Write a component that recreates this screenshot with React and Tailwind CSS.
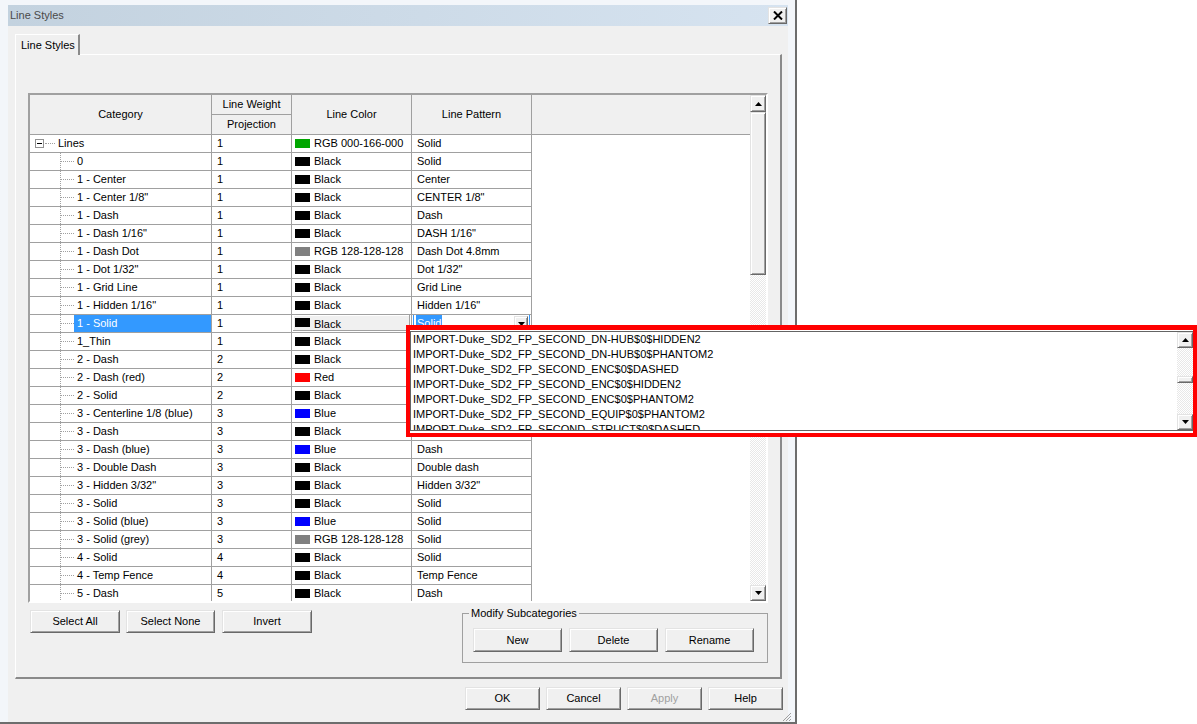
import React from "react";

const rows = [
  ["Lines", "1", "#00a600", "RGB 000-166-000", "Solid"],
  ["0", "1", "#000000", "Black", "Solid"],
  ["1 - Center", "1", "#000000", "Black", "Center"],
  ["1 - Center 1/8\"", "1", "#000000", "Black", "CENTER 1/8\""],
  ["1 - Dash", "1", "#000000", "Black", "Dash"],
  ["1 - Dash 1/16\"", "1", "#000000", "Black", "DASH 1/16\""],
  ["1 - Dash Dot", "1", "#808080", "RGB 128-128-128", "Dash Dot 4.8mm"],
  ["1 - Dot 1/32\"", "1", "#000000", "Black", "Dot 1/32\""],
  ["1 - Grid Line", "1", "#000000", "Black", "Grid Line"],
  ["1 - Hidden 1/16\"", "1", "#000000", "Black", "Hidden 1/16\""],
  ["1 - Solid", "1", "#000000", "Black", "Solid"],
  // patterns of the next rows sit under the open drop-down list
  ["1_Thin", "1", "#000000", "Black", ""],
  ["2 - Dash", "2", "#000000", "Black", ""],
  ["2 - Dash (red)", "2", "#ff0000", "Red", ""],
  ["2 - Solid", "2", "#000000", "Black", ""],
  ["3 - Centerline 1/8 (blue)", "3", "#0000ff", "Blue", ""],
  ["3 - Dash", "3", "#000000", "Black", ""],
  ["3 - Dash (blue)", "3", "#0000ff", "Blue", "Dash"],
  ["3 - Double Dash", "3", "#000000", "Black", "Double dash"],
  ["3 - Hidden 3/32\"", "3", "#000000", "Black", "Hidden 3/32\""],
  ["3 - Solid", "3", "#000000", "Black", "Solid"],
  ["3 - Solid (blue)", "3", "#0000ff", "Blue", "Solid"],
  ["3 - Solid (grey)", "3", "#808080", "RGB 128-128-128", "Solid"],
  ["4 - Solid", "4", "#000000", "Black", "Solid"],
  ["4 - Temp Fence", "4", "#000000", "Black", "Temp Fence"],
  ["5 - Dash", "5", "#000000", "Black", "Dash"],
];

const patterns = [
  "IMPORT-Duke_SD2_FP_SECOND_DN-HUB$0$HIDDEN2",
  "IMPORT-Duke_SD2_FP_SECOND_DN-HUB$0$PHANTOM2",
  "IMPORT-Duke_SD2_FP_SECOND_ENC$0$DASHED",
  "IMPORT-Duke_SD2_FP_SECOND_ENC$0$HIDDEN2",
  "IMPORT-Duke_SD2_FP_SECOND_ENC$0$PHANTOM2",
  "IMPORT-Duke_SD2_FP_SECOND_EQUIP$0$PHANTOM2",
  "IMPORT-Duke_SD2_FP_SECOND_STRUCT$0$DASHED",
];

const bevel =
  "bg-[#f0f0f0] border border-t-[#e3e3e3] border-l-[#e3e3e3] border-r-[#696969] border-b-[#696969] shadow-[inset_1px_1px_0_#ffffff,inset_-1px_-1px_0_#a0a0a0]";

function Btn({ children, className = "", disabled }) {
  return (
    <button
      type="button"
      className={`flex items-center justify-center ${bevel} ${
        disabled ? "text-[#a0a0a0]" : "text-black"
      } ${className}`}
    >
      {children}
    </button>
  );
}

function Arrow({ down }) {
  return (
    <svg width="7" height="4" viewBox="0 0 7 4">
      <polygon points={down ? "0,0 7,0 3.5,4" : "0,4 7,4 3.5,0"} fill="#000" />
    </svg>
  );
}

function Row({ row, index }) {
  const [name, weight, color, colorName, pattern] = row;
  const root = index === 0;
  const selected = index === 10;
  return (
    <div className="flex h-[18px] shrink-0">
      <div className="flex w-[182px] border-r border-b border-[#a0a0a0]">
        {root ? (
          <>
            <div className="ml-[5px] flex items-center">
              <div className="w-[9px] h-[9px] border border-[#919191] bg-white flex items-center justify-center">
                <div className="w-[5px] h-px bg-black" />
              </div>
            </div>
            <div className="ml-[1px] w-[10px] self-center border-t border-dotted border-[#a0a0a0]" />
            <div className="pl-[3px] flex items-center">{name}</div>
          </>
        ) : (
          <>
            <div className="ml-[30px] border-l border-dotted border-[#a0a0a0]" />
            <div className="w-[13px] self-center border-t border-dotted border-[#a0a0a0]" />
            <div
              className={`flex-1 flex items-center pl-[3px] ${
                selected ? "bg-[#3399ff] text-white" : ""
              }`}
            >
              {name}
            </div>
          </>
        )}
      </div>
      <div className="w-[80px] border-r border-b border-[#a0a0a0] pl-[5px] flex items-center">
        {weight}
      </div>
      {selected ? (
        <div className="w-[120px] border-r border-b border-[#a0a0a0] flex items-start">
          <div className="ml-[1px] w-[117px] h-[16px] bg-[#f0f0f0] border-r border-b border-[#a0a0a0] shadow-[inset_1px_1px_0_#ffffff] flex items-center pl-[2px]">
            <div className="w-[15px] h-[9px]" style={{ background: color }} />
            <span className="ml-[4px] pt-[3px]">{colorName}</span>
          </div>
        </div>
      ) : (
        <div className="w-[120px] border-r border-b border-[#a0a0a0] pl-[3px] flex items-center">
          <div className="w-[15px] h-[9px]" style={{ background: color }} />
          <span className="ml-[4px]">{colorName}</span>
        </div>
      )}
      {selected ? (
        <div className="w-[120px] border-r border-b border-[#a0a0a0] flex">
          <div className="flex-1 flex items-center ml-[1px] mr-[1px] border-x border-[#3399ff]">
            <span className="ml-[2px] px-[1px] bg-[#3399ff] text-white h-full flex items-center">
              {pattern}
            </span>
            <div className={`ml-auto mr-[1px] w-[14px] h-[15px] flex items-center justify-center ${bevel}`}>
              <Arrow down />
            </div>
          </div>
        </div>
      ) : (
        <div className="w-[120px] border-r border-b border-[#a0a0a0] pl-[5px] flex items-center">
          {pattern}
        </div>
      )}
      <div className="w-[218px]" />
    </div>
  );
}

function Table() {
  return (
    <div className="ml-[12px] mt-[38px] w-[740px] h-[510px] border-t-2 border-l-2 border-t-[#a0a0a0] border-l-[#a0a0a0] border-r-2 border-b-2 border-r-white border-b-white flex bg-white">
      <div className="w-[720px] flex flex-col overflow-hidden">
        <div className="flex h-[40px] shrink-0 bg-[#f0f0f0]">
          <div className="w-[182px] border-r border-b border-[#a0a0a0] flex items-center justify-center">
            Category
          </div>
          <div className="w-[80px] border-r border-b border-[#a0a0a0] flex flex-col">
            <div className="h-[20px] border-b border-[#a0a0a0] flex items-center justify-center">
              Line Weight
            </div>
            <div className="flex-1 flex items-center justify-center">Projection</div>
          </div>
          <div className="w-[120px] border-r border-b border-[#a0a0a0] flex items-center justify-center">
            Line Color
          </div>
          <div className="w-[120px] border-r border-b border-[#a0a0a0] flex items-center justify-center">
            Line Pattern
          </div>
          <div className="w-[218px] border-b border-[#a0a0a0]" />
        </div>
        <div className="flex-1 overflow-hidden flex flex-col">
          {rows.map((r, i) => (
            <Row key={i} row={r} index={i} />
          ))}
        </div>
      </div>
      <div className="w-[16px] flex flex-col">
        <div className={`h-[17px] flex items-center justify-center ${bevel}`}>
          <Arrow />
        </div>
        <div className={`h-[163px] ${bevel}`} />
        <div className="flex-1 bg-[repeating-conic-gradient(#ffffff_0%_25%,#e8e8e8_0%_50%)] bg-[length:2px_2px]" />
        <div className={`h-[16px] flex items-center justify-center ${bevel}`}>
          <Arrow down />
        </div>
      </div>
    </div>
  );
}

function Dropdown() {
  return (
    <div className="absolute left-[406px] top-[325px] w-[791px] h-[112px] border-[4px] border-t-[5px] border-[#ff0000] bg-white">
      <div className="mt-[1px] h-[100px] flex border-y border-l border-[#646464]">
        <div className="flex-1 overflow-hidden pl-[2px]">
          {patterns.map((p) => (
            <div key={p} className="h-[15px] flex items-center whitespace-nowrap">
              {p}
            </div>
          ))}
        </div>
        <div className="w-[16px] flex flex-col">
          <div className={`h-[16px] flex items-center justify-center ${bevel}`}>
            <Arrow />
          </div>
          <div className="h-[28px] bg-[repeating-conic-gradient(#ffffff_0%_25%,#e8e8e8_0%_50%)] bg-[length:2px_2px]" />
          <div className={`h-[7px] ${bevel}`} />
          <div className="flex-1 bg-[repeating-conic-gradient(#ffffff_0%_25%,#e8e8e8_0%_50%)] bg-[length:2px_2px]" />
          <div className={`h-[16px] flex items-center justify-center ${bevel}`}>
            <Arrow down />
          </div>
        </div>
      </div>
    </div>
  );
}

export default function App() {
  return (
    <div className="relative w-[1197px] h-[724px] bg-white overflow-hidden font-['Liberation_Sans',Arial,sans-serif] text-[11px] leading-none text-black">
      <div className="w-[797px] h-[724px] bg-[#f3f6fa] border-r-2 border-b-2 border-[#6d6d6d] pl-[8px] pr-[7px] pt-[5px] pb-[5px] flex flex-col">
        <div className="h-[21px] shrink-0 bg-linear-to-r from-[#c3d2df] to-[#d6e3f0] flex items-center pl-[2px]">
          <span className="text-[#4a4a4a]">Line Styles</span>
          <div className={`ml-auto mr-[1px] w-[19px] h-[17px] flex items-center justify-center ${bevel}`}>
            <svg width="10" height="9" viewBox="0 0 10 9">
              <path d="M1 0.5 L9 8.5 M9 0.5 L1 8.5" stroke="#000" strokeWidth="2" />
            </svg>
          </div>
        </div>
        <div className="flex-1 bg-[#f0f0f0] flex flex-col">
          <div className="ml-[7px] mt-[8px] flex">
            <div className="relative h-[21px] -mb-[1px] w-[65px] bg-[#f0f0f0] border-t border-l border-white border-r-2 border-r-[#8a8a8a] flex items-center pl-[5px]">
              Line Styles
            </div>
          </div>
          <div className="ml-[7px] w-[767px] h-[625px] border-t border-l border-white border-r-2 border-b-2 border-r-[#8a8a8a] border-b-[#8a8a8a] flex flex-col">
            <Table />
            <div className="mt-[4px] flex items-start">
              <div className="ml-[14px] mt-[3px] flex">
                <Btn className="w-[90px] h-[23px]">Select All</Btn>
                <Btn className="ml-[6px] w-[89px] h-[23px]">Select None</Btn>
                <Btn className="ml-[7px] w-[90px] h-[23px]">Invert</Btn>
              </div>
              <fieldset className="ml-[150px] w-[306px] border border-[#a0a0a0] pl-[10px] pt-[8px] pb-[10px]">
                <legend className="-ml-[4px] px-[2px] leading-[13px]">Modify Subcategories</legend>
                <div className="flex gap-[7px]">
                  <Btn className="w-[89px] h-[24px]">New</Btn>
                  <Btn className="w-[89px] h-[24px]">Delete</Btn>
                  <Btn className="w-[89px] h-[24px]">Rename</Btn>
                </div>
              </fieldset>
            </div>
          </div>
          <div className="mt-[8px] mr-[5px] flex justify-end gap-[6px]">
            <Btn className="w-[75px] h-[23px]">OK</Btn>
            <Btn className="w-[75px] h-[23px]">Cancel</Btn>
            <Btn className="w-[75px] h-[23px]" disabled>
              Apply
            </Btn>
            <Btn className="w-[75px] h-[23px]">Help</Btn>
          </div>
          <div className="flex-1 flex items-end justify-end">
            <svg width="12" height="12" viewBox="0 0 12 12" className="mr-[-4px]">
              <path d="M11 3 L3 11 M11 6 L6 11 M11 9 L9 11" stroke="#a0a0a0" strokeWidth="1" />
            </svg>
          </div>
        </div>
      </div>
      <Dropdown />
    </div>
  );
}
